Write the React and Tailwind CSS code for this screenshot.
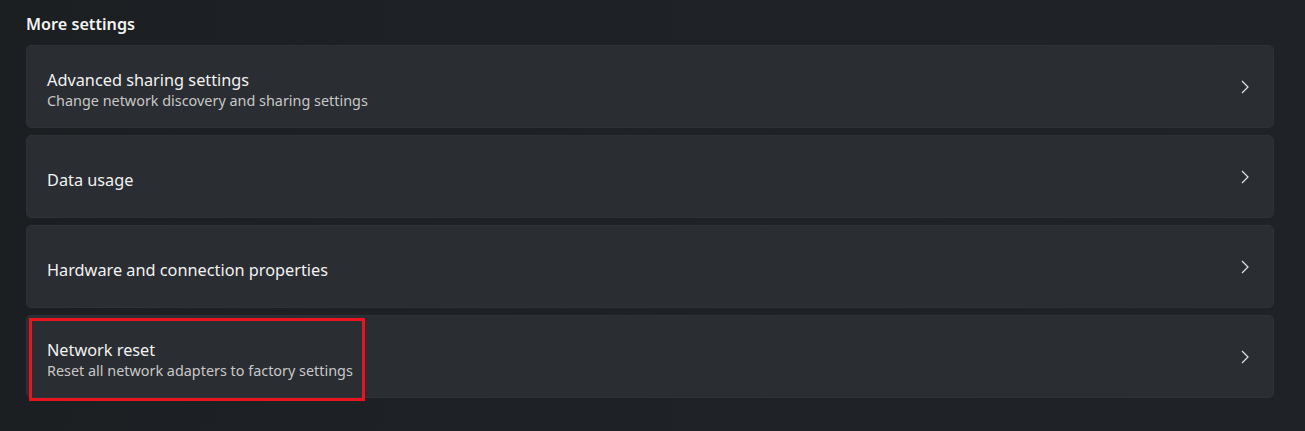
import React from "react";

const items = [
  { title: "Advanced sharing settings", sub: "Change network discovery and sharing settings" },
  { title: "Data usage" },
  { title: "Hardware and connection properties" },
  { title: "Network reset", sub: "Reset all network adapters to factory settings", marked: true },
];

const Chevron = () => (
  <svg width="16" height="16" viewBox="0 0 16 16" fill="none" className="text-[#e4e4e4] mt-[1px]">
    <path d="M5 2 L11 8 L5 14" stroke="currentColor" strokeWidth="1.2" />
  </svg>
);

const App = () => {
  return (
    <div
      className="w-[1305px] h-[431px] overflow-hidden bg-gradient-to-r from-[#1c1f22] via-[#1e2226] to-[#1f2226] pl-[26px] pr-[31px] pt-[13px] text-white"
      style={{ fontFamily: '"Noto Sans", "Open Sans", sans-serif' }}
    >
      <h2 className="text-[16.2px] font-semibold leading-[22px] mb-[10px] text-[#f3f3f3]">More settings</h2>

      <div className="flex flex-col gap-[7px]">
        {items.map((it) => (
          <div
            key={it.title}
            className="relative h-[83px] rounded-[5px] bg-[#2a2d31] border border-[#2e3135] flex items-center pl-[20px] pr-[20px]"
          >
            <div className="flex-1 flex flex-col pt-[6px]">
              <span className="text-[16.3px] leading-[22px] text-[#f2f2f2]">{it.title}</span>
              {it.sub && (
                <span className="text-[14.4px] leading-[20px] text-[#c8c8c8]">{it.sub}</span>
              )}
            </div>
            <Chevron />
            {/* highlight box */}
            {it.marked && (
              <div className="absolute left-[2px] top-[2px] w-[336px] h-[83px] border-[3px] border-[#e8141f] pointer-events-none"></div>
            )}
          </div>
        ))}
      </div>
    </div>
  );
};

export default App;
